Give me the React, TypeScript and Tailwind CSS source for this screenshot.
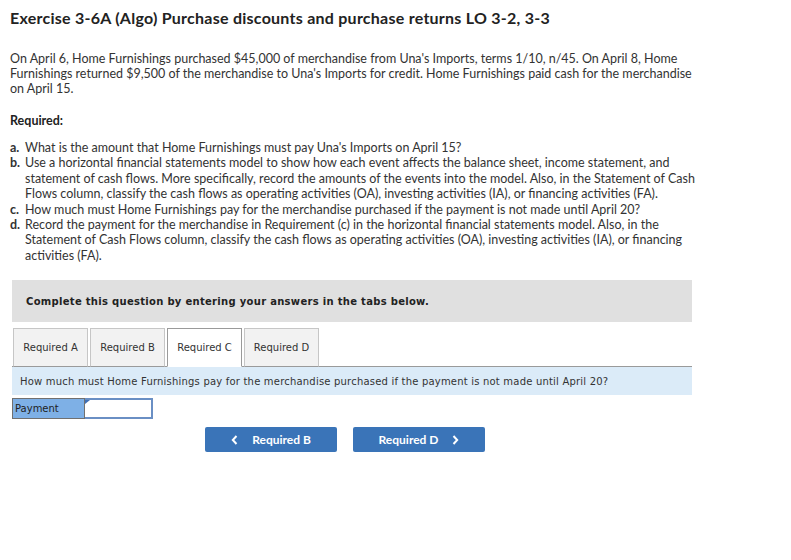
import React, { useState } from 'react';

const body = "font-['Lato','Open_Sans',sans-serif]";
const verdana = "font-['DejaVu_Sans','Verdana',sans-serif]";

const tabs = ['Required A', 'Required B', 'Required C', 'Required D'];

const items: { label: string; text: string }[] = [
  { label: 'a.', text: "What is the amount that Home Furnishings must pay Una's Imports on April 15?" },
  {
    label: 'b.',
    text: 'Use a horizontal financial statements model to show how each event affects the balance sheet, income statement, and statement of cash flows. More specifically, record the amounts of the events into the model. Also, in the Statement of Cash Flows column, classify the cash flows as operating activities (OA), investing activities (IA), or financing activities (FA).',
  },
  { label: 'c.', text: 'How much must Home Furnishings pay for the merchandise purchased if the payment is not made until April 20?' },
  {
    label: 'd.',
    text: 'Record the payment for the merchandise in Requirement (c) in the horizontal financial statements model. Also, in the Statement of Cash Flows column, classify the cash flows as operating activities (OA), investing activities (IA), or financing activities (FA).',
  },
];

export default function App() {
  const [active, setActive] = useState(2);

  return (
    <div className={`w-[791px] h-[560px] bg-white text-[#333] ${body}`}>
      <div className="px-[10px] pt-[8px]">
        <h1 className="text-[16px] font-bold leading-[20px] tracking-[0.25px] text-[#222]">
          Exercise 3-6A (Algo) Purchase discounts and purchase returns LO 3-2, 3-3
        </h1>

        <p className="mt-[23px] w-[695px] text-[12.5px] leading-[15px]">
          On April 6, Home Furnishings purchased $45,000 of merchandise from Una's Imports, terms 1/10, n/45. On April 8, Home
          Furnishings returned $9,500 of the merchandise to Una's Imports for credit. Home Furnishings paid cash for the merchandise
          on April 15.
        </p>

        <p className="mt-[17px] text-[12.5px] font-bold leading-[15px] text-[#222]">Required:</p>

        <ol className="mt-[12px] w-[705px] text-[12.5px] leading-[15.4px]">
          {items.map((it) => (
            <li key={it.label} className="flex">
              <span className="w-[15px] shrink-0 font-bold">{it.label}</span>
              <span>{it.text}</span>
            </li>
          ))}
        </ol>
      </div>

      <div className="ml-3 mt-[17px] w-[680px]">
        <div className="h-[42px] flex items-center bg-[#e0e0e0] px-[14px]">
          <span className={`${verdana} text-[10px] font-bold tracking-[0.3px] text-[#222]`}>
            Complete this question by entering your answers in the tabs below.
          </span>
        </div>

        <div className="mt-[6px] flex gap-[2px] pl-px border-b border-[#9a9a9a]">
          {tabs.map((t, i) => (
            <button
              key={t}
              onClick={() => setActive(i)}
              className={`${verdana} -mb-px h-[39px] w-[75px] border text-[10px] text-[#333] ${
                i === active ? 'bg-white border-[#9a9a9a] border-b-white' : 'bg-[#f2f2f2] border-[#c6c6c6] border-b-[#9a9a9a]'
              }`}
            >
              {t}
            </button>
          ))}
        </div>

        <div className={`${verdana} h-[28px] flex items-center bg-[#dbebf8] px-[8px] text-[10px] tracking-[0.2px] text-[#333]`}>
          How much must Home Furnishings pay for the merchandise purchased if the payment is not made until April 20?
        </div>

        <div className="mt-[3px] flex h-[21px]">
          <div className={`${verdana} w-[73px] flex items-center border border-[#707070] bg-[#7eb0e6] pl-[2px] text-[10px] text-[#222]`}>
            Payment
          </div>
          <div className="relative w-[68px] border-2 border-l-0 border-[#6a8fc4] bg-white">
            <span className="absolute left-0 top-0 h-0 w-0 border-l-[5px] border-b-[4px] border-l-[#3f6fb5] border-b-transparent" />
          </div>
        </div>

        <div className="mt-[8px] flex gap-4 pl-[193px]">
          <button className="h-[25px] w-[132px] flex items-center justify-center gap-[14px] rounded-[2px] bg-[#3a74b8] text-[12px] font-bold text-white">
            <svg width="7" height="10" viewBox="0 0 7 10" fill="none">
              <path d="M5.5 1 L1.8 5 L5.5 9" stroke="white" strokeWidth="2" />
            </svg>
            Required B
          </button>
          <button className="h-[25px] w-[132px] flex items-center justify-center gap-[14px] rounded-[2px] bg-[#3a74b8] text-[12px] font-bold text-white">
            Required D
            <svg width="7" height="10" viewBox="0 0 7 10" fill="none">
              <path d="M1.5 1 L5.2 5 L1.5 9" stroke="white" strokeWidth="2" />
            </svg>
          </button>
        </div>
      </div>
    </div>
  );
}
